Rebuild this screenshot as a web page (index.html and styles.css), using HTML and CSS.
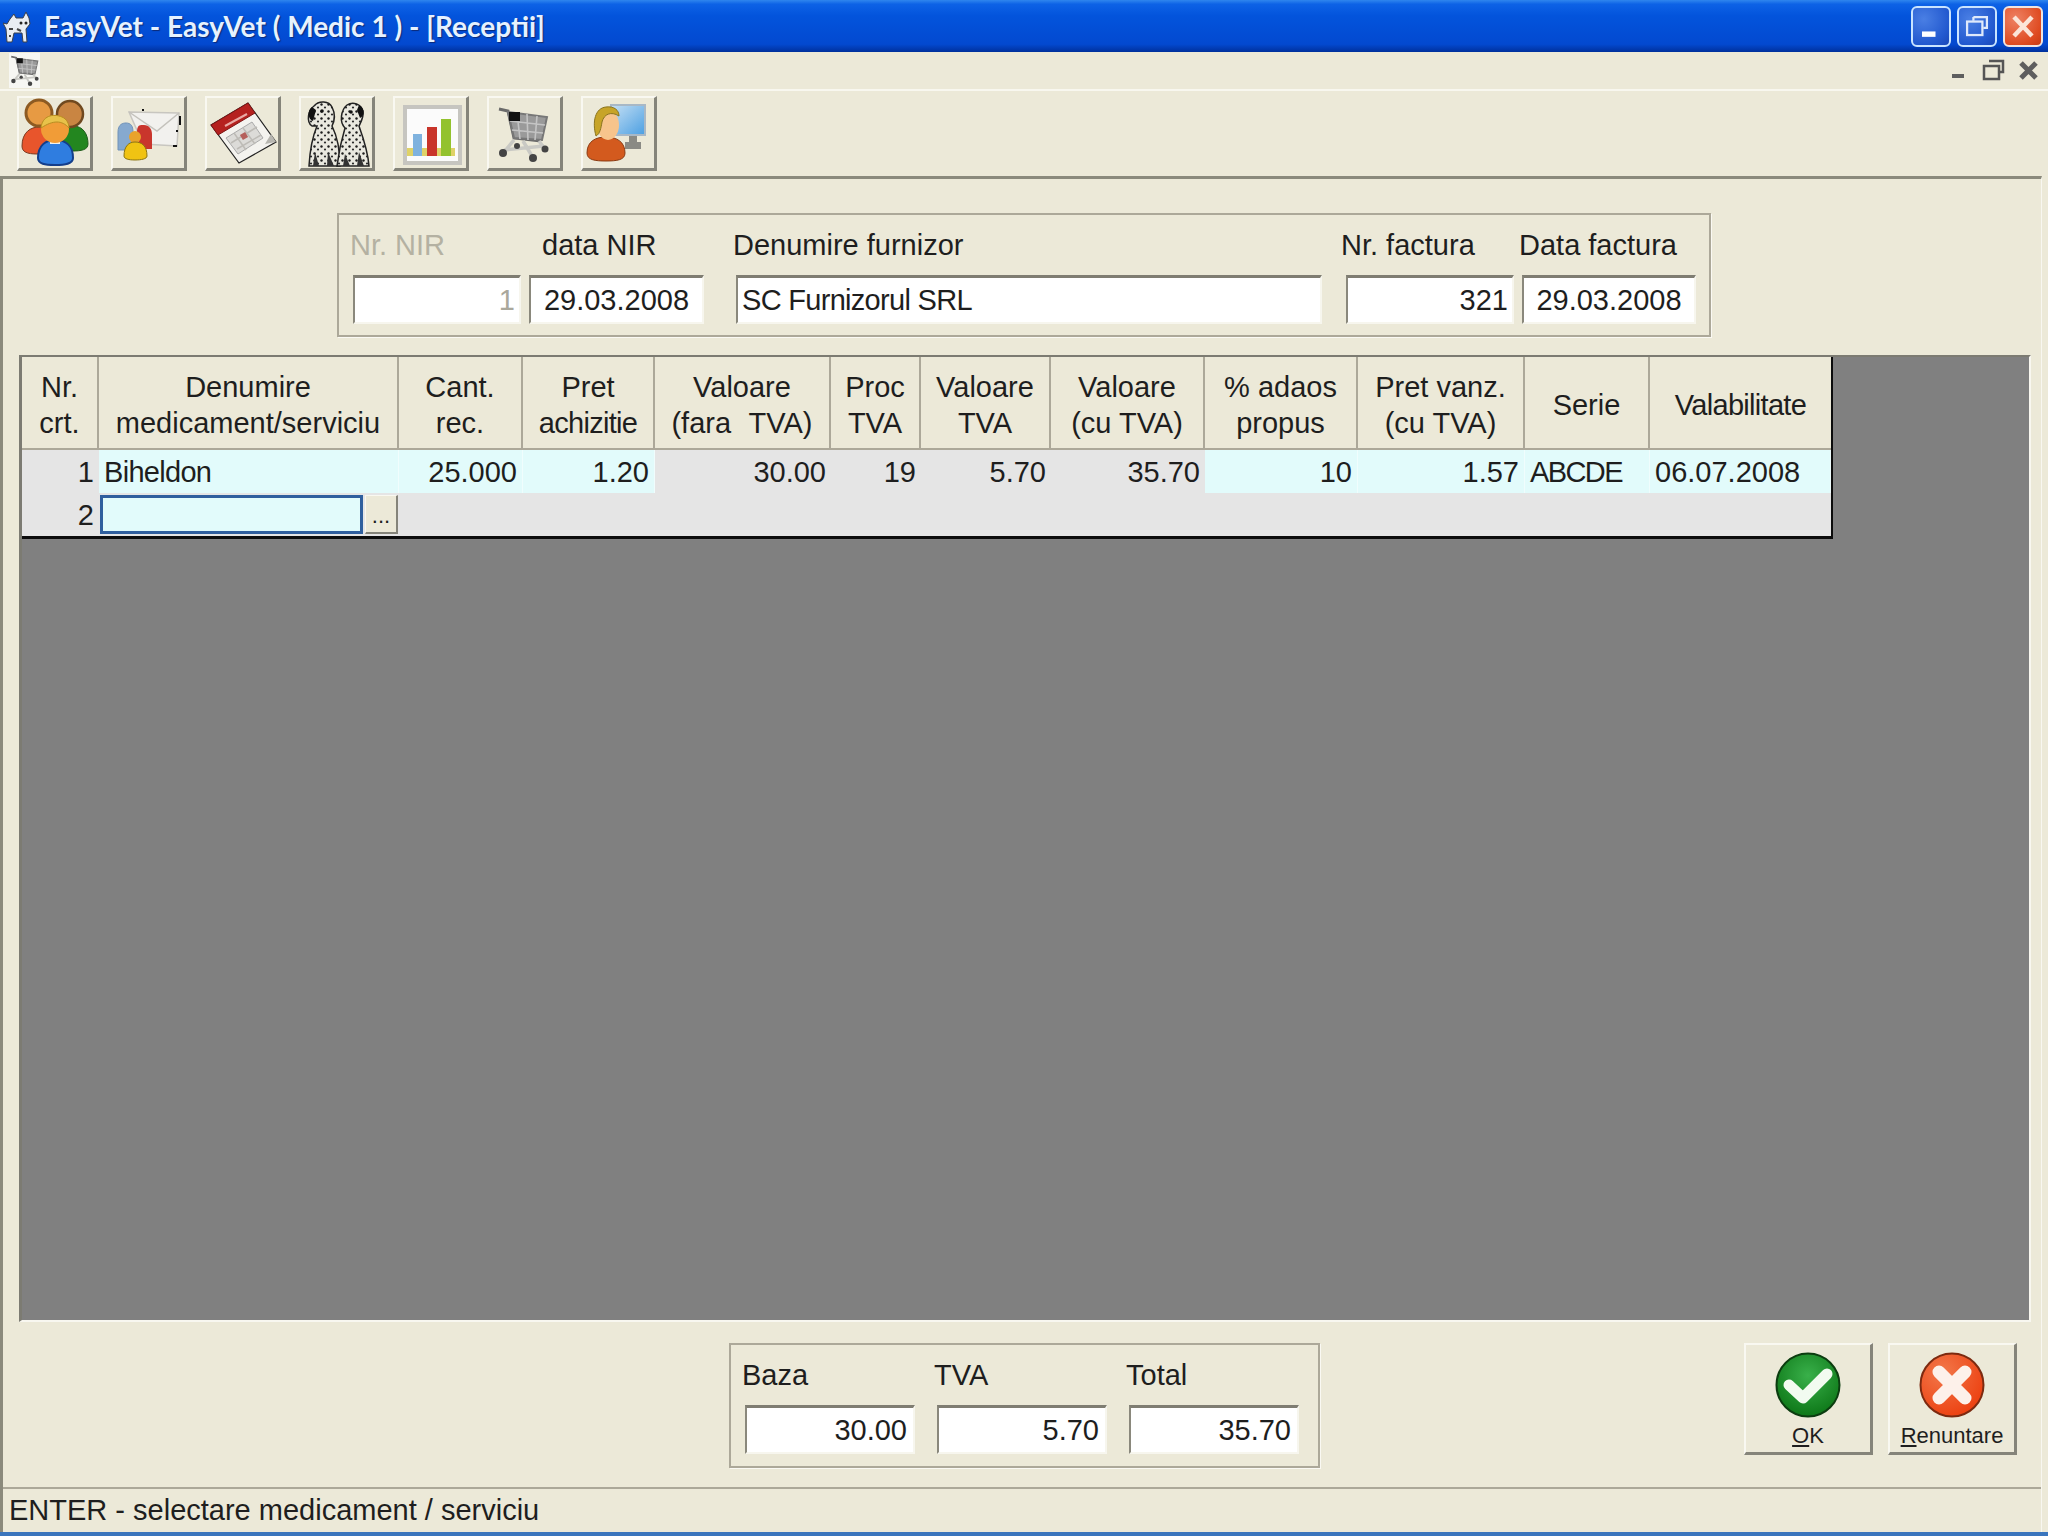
FILE: index.html
```html
<!DOCTYPE html>
<html lang="en">

<head>
  <meta charset="UTF-8" />
  <title>EasyVet - Receptii</title>
  <link rel="stylesheet" href="styles.css">
</head>

<body>
  <svg class="defs" width="0" height="0">
    <defs>
      <pattern id="spots" width="7" height="7" patternUnits="userSpaceOnUse">
        <rect width="7" height="7" fill="#e9e8df" />
        <circle cx="1.5" cy="1.5" r="1.2" fill="#1c1c1c" />
        <circle cx="5" cy="4.5" r="1.1" fill="#2a2a2a" />
      </pattern>
      <linearGradient id="screen" x1="0" y1="0" x2="1" y2="1">
        <stop offset="0" stop-color="#c6e0f4" />
        <stop offset="1" stop-color="#4b9fe2" />
      </linearGradient>
      <radialGradient id="green-ball" cx="0.5" cy="0.35" r="0.7">
        <stop offset="0" stop-color="#39b04a" />
        <stop offset="1" stop-color="#0a7314" />
      </radialGradient>
      <radialGradient id="red-ball" cx="0.35" cy="0.3" r="0.8">
        <stop offset="0" stop-color="#f2784a" />
        <stop offset="1" stop-color="#ec3c0c" />
      </radialGradient>
      <symbol id="cart" viewBox="0 0 76 75">
        <path d="M12 13 L21 15 L27 42 L54 45" fill="none" stroke="#6a6a6a" stroke-width="3" />
        <path d="M21 16 L60 21 L55 44 L27 42 Z" fill="#9a9a9a" stroke="#777" stroke-width="2" />
        <path d="M30 17 L33 43 M40 18 L41 44 M50 20 L48 44 M23 25 L58 29 M25 34 L56 37" stroke="#c4c4c4" stroke-width="1.6" fill="none" />
        <rect x="22" y="16" width="11" height="9" fill="#111" />
        <path d="M27 44 L17 56 M36 45 L45 60 M52 45 L57 52 M17 54 L57 50" stroke="#c9c9c4" stroke-width="3.5" fill="none" />
        <circle cx="16" cy="57" r="4" fill="#444" />
        <circle cx="46" cy="62" r="4" fill="#444" />
        <circle cx="58" cy="53" r="3.5" fill="#444" />
        <circle cx="30" cy="50" r="3" fill="#444" />
      </symbol>
    </defs>
  </svg>

  <div class="window">
    <div class="titlebar">
      <svg class="title-icon" viewBox="0 0 32 34">
        <path d="M7 10 L11 5 L13 9 L20 9 L23 3 L26 9 L27 15 L23 20 L24 33 L20 33 L19 24 L11 24 L9 33 L4 33 L3 20 L0 14 L4 15 Z" fill="#e9edf2" stroke="#39404c" stroke-width="1" />
        <circle cx="18" cy="14" r="1.5" fill="#222" />
        <circle cx="23" cy="14" r="1.5" fill="#222" />
        <path d="M6 20 L10 20 M6 27 L8 27 M14 20 L18 22" stroke="#444" stroke-width="2" />
      </svg>
      <span class="title-text">EasyVet - EasyVet ( Medic 1 ) - [Receptii]</span>
      <div class="title-buttons">
        <div class="title-btn">
          <svg viewBox="0 0 40 41"><rect x="10" y="26" width="15" height="6" fill="#fff" /></svg>
        </div>
        <div class="title-btn">
          <svg viewBox="0 0 40 41"><path d="M16 10 H31 V22 H27 M16 10 V14" fill="none" stroke="#dfe9fb" stroke-width="2.5" /><rect x="9" y="15" width="17" height="15" fill="none" stroke="#dfe9fb" stroke-width="2.5" /></svg>
        </div>
        <div class="title-btn close">
          <svg viewBox="0 0 40 41"><path d="M10 10 L30 31 M30 10 L10 31" stroke="#fbe5d8" stroke-width="5" /></svg>
        </div>
      </div>
    </div>

    <div class="menubar">
      <svg class="menu-icon" viewBox="8 8 56 60"><use href="#cart" width="76" height="75" /></svg>
      <div class="mdi-buttons">
        <div class="mdi-btn"><svg viewBox="0 0 31 33"><rect x="9" y="20" width="12" height="4" fill="#5e5e5e" /></svg></div>
        <div class="mdi-btn"><svg viewBox="0 0 31 33"><path d="M11 7 H25 V18 H21" fill="none" stroke="#555" stroke-width="2.5" /><rect x="6" y="12" width="15" height="13" fill="none" stroke="#555" stroke-width="2.5" /></svg></div>
        <div class="mdi-btn"><svg viewBox="0 0 31 33"><path d="M8 9 L23 24 M23 9 L8 24" stroke="#5e5e5e" stroke-width="5" /></svg></div>
      </div>
    </div>

    <div class="toolbar">
      <div class="tool-btn">
        <svg viewBox="0 0 76 75">
          <path d="M5 50 C5 36 14 31 22 31 C32 31 38 38 38 50 C38 56 30 58 20 58 C10 58 5 56 5 50 Z" fill="#e8552c" stroke="#7a3a20" stroke-width="1" />
          <path d="M40 48 C40 36 48 30 56 30 C66 30 71 38 71 48 C71 54 64 55 55 55 C46 55 40 54 40 48 Z" fill="#23861f" stroke="#1c5a18" stroke-width="1" />
          <circle cx="22" cy="17" r="13" fill="#e79a43" stroke="#8d5a22" stroke-width="3" />
          <circle cx="53" cy="18" r="13" fill="#c98542" stroke="#70491f" stroke-width="2.5" />
          <path d="M21 62 C21 49 29 44 38 44 C48 44 56 49 56 62 C56 68 48 69 38 69 C28 69 21 68 21 62 Z" fill="#2f7de0" stroke="#143e8a" stroke-width="2" />
          <rect x="33" y="43" width="10" height="5" fill="#f0f0ee" />
          <circle cx="38" cy="33" r="14" fill="#f19c37" />
          <path d="M24 32 C25 20 36 17 45 21 C50 23 52 28 52 32 C45 24 36 24 24 32 Z" fill="#e8c24a" stroke="#b78c20" stroke-width="1" />
        </svg>
      </div>
      <div class="tool-btn">
        <svg viewBox="0 0 76 75">
          <path d="M18 16 L68 17 L66 50 L32 48 Z" fill="#f2f1ee" stroke="#c8c6c0" stroke-width="1.5" />
          <path d="M18 16 L46 35 L68 17" fill="none" stroke="#c4c2bc" stroke-width="1.5" />
          <path d="M32 13 v2 M69 20 v9 M66 34 v2 M62 50 h4" stroke="#111" stroke-width="2" />
          <path d="M7 54 V36 C7 28 12 27 15 27 C20 27 22 30 22 36 V54 Z" fill="#86a9cf" stroke="#7092b8" stroke-width="1" />
          <path d="M26 53 V36 C26 28 30 29 33 29 C38 29 41 33 41 38 V53 Z" fill="#c9352c" />
          <circle cx="24" cy="41" r="6" fill="#e9a32b" />
          <path d="M13 60 C13 50 18 46 24 46 C31 46 36 50 36 60 C36 63 30 64 24 64 C18 64 13 63 13 60 Z" fill="#f0c313" stroke="#8b7410" stroke-width="1" />
        </svg>
      </div>
      <div class="tool-btn">
        <svg viewBox="0 0 76 75">
          <path d="M6 29 L43 7 L71 46 L34 67 Z" fill="#f4f3ef" stroke="#222" stroke-width="1.2" />
          <path d="M6 29 L43 7 L50 17 L13 39 Z" fill="#b5211f" stroke="#7e1514" stroke-width="1" />
          <path d="M20 30 L42 18" stroke="#e9a9a4" stroke-width="2" />
          <path d="M21 42 L47 26 L58 42 L33 58 Z" fill="#dcdbd8" stroke="#aaa" stroke-width="1" />
          <path d="M29 37 L41 54 M38 32 L50 48 M26 47 L52 31 M32 53 L56 39" stroke="#bdbbb6" stroke-width="1.5" />
          <rect x="36" y="37" width="6" height="6" fill="#b5605c" transform="rotate(-30 39 40)" />
          <path d="M60 48 L66 38 L71 46 Z" fill="#b7b6b0" />
        </svg>
      </div>
      <div class="tool-btn">
        <svg viewBox="0 0 76 75">
          <path d="M10 70 C11 52 13 42 18 30 L13 30 C7 26 9 14 15 10 C20 4 30 5 33 11 C36 17 36 24 33 30 C39 42 41 56 41 70 Z" fill="url(#spots)" stroke="#222" stroke-width="1.5" />
          <path d="M38 70 C40 54 43 42 46 32 C40 26 42 14 48 9 C54 5 62 8 64 15 C65 21 62 26 60 30 C65 44 69 56 70 70 Z" fill="url(#spots)" stroke="#222" stroke-width="1.5" />
          <path d="M13 11 C8 14 9 24 14 25 L17 14 Z M60 9 C66 12 66 20 61 22 L58 14 Z" fill="#111" />
          <path d="M14 70 L16 56 L20 70 Z M28 70 L29 56 L35 70 Z M44 70 L46 58 L51 70 Z M58 70 L60 56 L65 70 Z" fill="#333" />
          <circle cx="23" cy="15" r="1.8" fill="#111" />
          <circle cx="52" cy="16" r="1.8" fill="#111" />
        </svg>
      </div>
      <div class="tool-btn">
        <svg viewBox="0 0 76 75">
          <rect x="12" y="11" width="55" height="56" fill="#fbfbfb" stroke="#c6c5c0" stroke-width="4" />
          <rect x="14" y="52" width="48" height="8" fill="#dfd268" />
          <rect x="20" y="38" width="9" height="22" fill="#7fb2de" />
          <rect x="34" y="31" width="10" height="29" fill="#c8342a" />
          <rect x="48" y="23" width="10" height="37" fill="#93c22e" />
        </svg>
      </div>
      <div class="tool-btn">
        <svg viewBox="0 0 76 75"><use href="#cart" width="76" height="75" /></svg>
      </div>
      <div class="tool-btn">
        <svg viewBox="0 0 76 75">
          <rect x="30" y="9" width="34" height="30" fill="url(#screen)" stroke="#a8b8c6" stroke-width="2" />
          <path d="M48 40 H56 V46 H60 V53 H44 V46 H48 Z" fill="#8a8a84" />
          <path d="M6 57 C6 45 15 41 25 41 C36 41 44 46 44 57 C44 64 36 65 25 65 C14 65 6 64 6 57 Z" fill="#d35a1e" stroke="#8a3a12" stroke-width="1" />
          <ellipse cx="27" cy="29" rx="11" ry="15" fill="#f7c48c" />
          <path d="M15 40 C11 26 14 12 25 11 C33 10 38 14 38 20 C30 15 23 18 21 26 C20 32 19 38 15 40 Z" fill="#c7a428" stroke="#8a7420" stroke-width="1" />
        </svg>
      </div>
    </div>

    <div class="client">
      <div class="panel top-panel">
        <div class="top-fields">
          <label class="lbl disabled">Nr. NIR</label>
          <label class="lbl lbl-date">data NIR</label>
          <label class="lbl lbl-furnizor">Denumire furnizor</label>
          <label class="lbl lbl-factura">Nr. factura</label>
          <label class="lbl">Data factura</label>
          <div class="box num disabled">1</div>
          <div class="box date">29.03.2008</div>
          <div class="box box-furnizor tight">SC Furnizorul SRL</div>
          <div class="box box-factura num">321</div>
          <div class="box date">29.03.2008</div>
        </div>
      </div>

      <div class="mdi-area">
        <table class="grid">
          <colgroup>
            <col class="c-nr"><col class="c-name"><col class="c-cant"><col class="c-pret"><col class="c-val"><col class="c-proc">
            <col class="c-tva"><col class="c-cu"><col class="c-adaos"><col class="c-vanz"><col class="c-serie"><col class="c-exp">
          </colgroup>
          <thead>
            <tr>
              <th>Nr.<br>crt.</th>
              <th>Denumire<br>medicament/serviciu</th>
              <th>Cant.<br>rec.</th>
              <th>Pret<br><span class="tight">achizitie</span></th>
              <th>Valoare<br><span class="wide">(fara TVA)</span></th>
              <th>Proc<br>TVA</th>
              <th>Valoare<br>TVA</th>
              <th>Valoare<br>(cu TVA)</th>
              <th>% adaos<br>propus</th>
              <th>Pret vanz.<br>(cu TVA)</th>
              <th>Serie</th>
              <th><span class="tight">Valabilitate</span></th>
            </tr>
          </thead>
          <tbody>
            <tr>
              <td class="num">1</td>
              <td class="edit"><span class="tight">Biheldon</span></td>
              <td class="edit num">25.000</td>
              <td class="edit num">1.20</td>
              <td class="num">30.00</td>
              <td class="num">19</td>
              <td class="num">5.70</td>
              <td class="num">35.70</td>
              <td class="edit num">10</td>
              <td class="edit num">1.57</td>
              <td class="edit"><span class="tighter">ABCDE</span></td>
              <td class="edit">06.07.2008</td>
            </tr>
            <tr>
              <td class="num">2</td>
              <td class="editor-cell">
                <div class="editor">
                  <div class="editor-input"></div>
                  <div class="editor-btn">...</div>
                </div>
              </td>
              <td></td><td></td><td></td><td></td><td></td><td></td><td></td><td></td><td></td><td></td>
            </tr>
          </tbody>
        </table>
      </div>

      <div class="footer">
        <div class="panel totals">
          <div class="total-fields">
            <label class="lbl">Baza</label>
            <label class="lbl">TVA</label>
            <label class="lbl">Total</label>
            <div class="box num">30.00</div>
            <div class="box num">5.70</div>
            <div class="box num">35.70</div>
          </div>
        </div>
        <div class="actions">
          <div class="action-btn">
            <svg viewBox="0 0 66 66">
              <circle cx="33" cy="33" r="31.5" fill="url(#green-ball)" stroke="#0c3d10" stroke-width="2" />
              <path d="M14 33 L28 46 L52 22" fill="none" stroke="#f2fbf0" stroke-width="11" stroke-linecap="round" stroke-linejoin="round" />
            </svg>
            <span><u>O</u>K</span>
          </div>
          <div class="action-btn">
            <svg viewBox="0 0 66 66">
              <circle cx="33" cy="33" r="31.5" fill="url(#red-ball)" stroke="#7c2a10" stroke-width="2" />
              <path d="M20 20 L46 46 M46 20 L20 46" fill="none" stroke="#fdf1ea" stroke-width="13" stroke-linecap="round" />
            </svg>
            <span><u>R</u>enuntare</span>
          </div>
        </div>
      </div>

      <div class="statusbar">ENTER - selectare medicament / serviciu</div>
    </div>

    <div class="taskline"></div>
  </div>
</body>

</html>
```

FILE: styles.css
```css
html,
body {
  margin: 0;
  padding: 0;
}

body {
  width: 2048px;
  height: 1536px;
  overflow: hidden;
  font-family: "Liberation Sans", Arial, sans-serif;
  font-size: 29px;
  color: #1e1e1e;
  background-color: #ece9d8;
}

.defs {
  display: block;
  height: 0;
}

.window {
  display: flex;
  flex-direction: column;
  width: 2048px;
  height: 1536px;
  box-sizing: border-box;
}

.tight {
  letter-spacing: -0.7px;
}

.tighter {
  letter-spacing: -1.6px;
}

.wide {
  word-spacing: 10px;
}

/* title bar */
.titlebar {
  display: flex;
  align-items: center;
  height: 52px;
  flex: none;
  box-sizing: border-box;
  padding: 0 5px 0 3px;
  background: linear-gradient(180deg, #2f86ee 0, #0d62e6 8%, #0354dc 30%, #0349d0 85%, #00309c 100%);
}

.title-icon {
  width: 32px;
  height: 34px;
  margin-right: 9px;
}

.title-text {
  font-family: Lato, sans-serif;
  font-weight: 700;
  font-size: 28px;
  color: #e6f2ff;
  text-shadow: 1px 1px 1px #0b2a78;
}

.title-buttons {
  display: flex;
  gap: 6px;
  margin-left: auto;
}

.title-btn {
  width: 40px;
  height: 41px;
  box-sizing: border-box;
  border: 2px solid #c9e4ff;
  border-radius: 6px;
  background: radial-gradient(circle at 30% 30%, #4a7fe4, #2259cf 70%, #1a48b8);
}

.title-btn.close {
  border-color: #f0e4e0;
  background: radial-gradient(circle at 30% 30%, #ee8264, #df4b21 70%, #c73a12);
}

.title-btn svg {
  display: block;
  width: 36px;
  height: 37px;
}

/* menu bar */
.menubar {
  display: flex;
  align-items: center;
  height: 39px;
  flex: none;
  box-sizing: border-box;
  padding: 0 4px 0 9px;
  border-bottom: 2px solid #f8f7ef;
}

.menu-icon {
  width: 31px;
  height: 35px;
  background: #f7f7f3;
  filter: blur(0.5px);
}

.mdi-buttons {
  display: flex;
  gap: 4px;
  margin-left: auto;
}

.mdi-btn {
  width: 31px;
  height: 33px;
}

.mdi-btn svg {
  display: block;
  width: 31px;
  height: 33px;
}

/* toolbar */
.toolbar {
  display: flex;
  gap: 18px;
  height: 85px;
  flex: none;
  box-sizing: border-box;
  padding: 5px 0 5px 17px;
}

.tool-btn {
  width: 76px;
  height: 75px;
  box-sizing: border-box;
  border-top: 2px solid #f9f8f1;
  border-left: 2px solid #f9f8f1;
  border-right: 3px solid #85847a;
  border-bottom: 3px solid #85847a;
}

.tool-btn svg {
  display: block;
  width: 76px;
  height: 75px;
  margin: -2px 0 0 -2px;
  filter: blur(0.6px);
}

/* main client area */
.client {
  display: flex;
  flex-direction: column;
  flex: 1;
  min-height: 0;
  margin-right: 6px;
  border-top: 3px solid #8b8a7c;
  border-left: 3px solid #8b8a7c;
  border-right: 1px solid #f8f7f0;
}

.panel {
  box-sizing: border-box;
  border: 2px solid #aca899;
  box-shadow: 1px 1px 0 #faf9f3;
}

.top-panel {
  flex: none;
  width: 1374px;
  height: 124px;
  margin: 34px 0 18px 334px;
  padding: 0 14px;
}

.top-fields {
  display: grid;
  grid-template-columns: 168px 175px 610px 184px 174px;
  grid-template-rows: 60px 49px;
  column-gap: 8px;
}

.lbl {
  display: block;
  align-self: center;
  margin-left: -3px;
  white-space: nowrap;
}

.lbl.lbl-date {
  margin-left: 13px;
}

.lbl.lbl-furnizor {
  margin-left: 21px;
}

.lbl.lbl-factura {
  margin-left: 11px;
}

.lbl.disabled {
  color: #b4b1a2;
}

.box {
  box-sizing: border-box;
  height: 49px;
  line-height: 44px;
  padding: 0 4px;
  background: #fff;
  border-top: 3px solid #7f7d72;
  border-left: 2px solid #8a887c;
  border-right: 2px solid #f7f6ee;
  border-bottom: 2px solid #f7f6ee;
  white-space: nowrap;
}

.box.box-furnizor {
  margin-left: 24px;
}

.box.box-factura {
  margin-left: 16px;
}

.box.num {
  text-align: right;
}

.box.date {
  text-align: center;
}

.box.disabled {
  color: #aaa89c;
}

/* dark MDI area with the grid */
.mdi-area {
  flex: none;
  height: 967px;
  width: 2012px;
  box-sizing: border-box;
  margin-left: 16px;
  background: #808080;
  border-top: 2px solid #7c7b72;
  border-left: 3px solid #7c7b72;
  border-right: 2px solid #f8f7f0;
  border-bottom: 2px solid #f8f7f0;
}

.grid {
  table-layout: fixed;
  width: 1811px;
  border-collapse: separate;
  border-spacing: 0;
  border-right: 2px solid #0c0c0c;
  border-bottom: 3px solid #0c0c0c;
  background: #e5e5e5;
}

.c-nr { width: 77px; }
.c-name { width: 300px; }
.c-cant { width: 124px; }
.c-pret { width: 132px; }
.c-val { width: 176px; }
.c-proc { width: 90px; }
.c-tva { width: 130px; }
.c-cu { width: 154px; }
.c-adaos { width: 153px; }
.c-vanz { width: 167px; }
.c-serie { width: 125px; }
.c-exp { width: 181px; }

.grid th {
  height: 93px;
  box-sizing: border-box;
  padding: 5px 0 0;
  font-weight: 400;
  line-height: 36px;
  background: #ece9d8;
  border-right: 2px solid #aca899;
  border-bottom: 2px solid #aca899;
  white-space: nowrap;
}

.grid th:last-child {
  border-right: none;
}

.grid td {
  height: 43px;
  box-sizing: border-box;
  padding: 0 5px;
  line-height: 42px;
  white-space: nowrap;
}

.grid td.num {
  text-align: right;
}

.grid td.edit {
  background: #e2fbfb;
  border-right: 1px solid #f0fdfd;
}

.grid td.editor-cell {
  padding: 0;
}

.editor {
  display: flex;
  align-items: center;
  gap: 2px;
}

.editor-input {
  width: 263px;
  height: 39px;
  box-sizing: border-box;
  margin-left: 1px;
  background: #e2fbfb;
  border: 3px solid #2f5f9e;
}

.editor-btn {
  width: 33px;
  height: 39px;
  box-sizing: border-box;
  font-size: 22px;
  line-height: 40px;
  text-align: center;
  background: #ece9d8;
  border-top: 1px solid #f9f8f1;
  border-left: 1px solid #f9f8f1;
  border-right: 2px solid #85847a;
  border-bottom: 2px solid #85847a;
}

/* footer */
.footer {
  display: flex;
  flex: none;
  height: 165px;
  box-sizing: border-box;
  padding-top: 21px;
  align-items: flex-start;
}

.totals {
  width: 591px;
  height: 125px;
  margin-left: 726px;
  padding: 0 14px;
}

.total-fields {
  display: grid;
  grid-template-columns: 170px 170px 170px;
  grid-template-rows: 60px 49px;
  column-gap: 22px;
}

.total-fields .box {
  padding-right: 6px;
}

.total-fields .lbl {
  margin-left: -3px;
  margin-top: 1px;
}

.actions {
  display: flex;
  gap: 15px;
  margin-left: 424px;
}

.action-btn {
  display: flex;
  flex-direction: column;
  align-items: center;
  width: 129px;
  height: 112px;
  box-sizing: border-box;
  padding-top: 7px;
  border-top: 2px solid #f9f8f1;
  border-left: 2px solid #f9f8f1;
  border-right: 3px solid #85847a;
  border-bottom: 3px solid #85847a;
  font-size: 22px;
}

.action-btn svg {
  width: 66px;
  height: 66px;
  flex: none;
}

.action-btn span {
  margin-top: 5px;
}

/* status bar */
.statusbar {
  flex: none;
  height: 45px;
  box-sizing: border-box;
  padding-left: 6px;
  line-height: 42px;
  border-top: 2px solid #aca899;
  white-space: nowrap;
}

.taskline {
  height: 4px;
  flex: none;
  background: #3a75bd;
}
```
